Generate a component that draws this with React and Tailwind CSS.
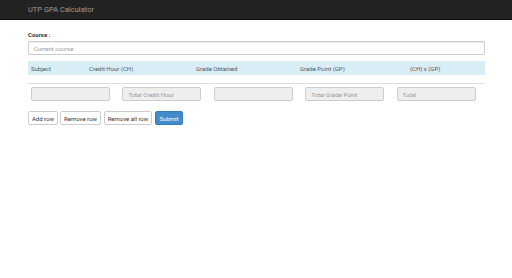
export default function App() {
  const font = { fontFamily: "Roboto, 'Liberation Sans', sans-serif" };
  const cols = [
    { label: "Subject", w: "w-[58px]" },
    { label: "Credit Hour (CH)", w: "w-[107px]" },
    { label: "Grade Obtained", w: "w-[104px]" },
    { label: "Grade Point (GP)", w: "w-[110px]" },
    { label: "(CH) x (GP)", w: "flex-1" },
  ];
  const inputs = ["", "Total Credit Hour", "", "Total Grade Point", "Total"];
  return (
    <div className="min-h-[278px] bg-white text-[#333]" style={font}>
      <div className="h-[20px] bg-[#222] border-b border-[#080808] flex items-center pl-[28px]">
        <span className="text-[7.5px] text-[#9d9d9d] leading-none">UTP GPA Calculator</span>
      </div>
      <div className="ml-[28px] mr-[27px]">
        <div className="mt-[12px] text-[6px] font-bold leading-none h-[7px]">Course :</div>
        <div className="mt-[2px] h-[14px] border border-[#ccc] rounded-[2px] flex items-center pl-[5px] text-[6px] text-[#999] shadow-[inset_0_1px_1px_rgba(0,0,0,0.075)]">
          Current course
        </div>
        <div className="mt-[6px] h-[14px] bg-[#d9edf7] flex items-center text-[6px] text-[#555]">
          {cols.map((c) => (
            <div key={c.label} className={`${c.w} pl-[3px]`}>{c.label}</div>
          ))}
        </div>
        <div className="mt-[8px] border-t border-[#ddd] pt-[3px] grid grid-cols-5">
          {inputs.map((p, i) => (
            <div key={i} className="pl-[3px]">
              <div className="w-[79px] h-[14px] bg-[#eee] border border-[#ccc] rounded-[2px] flex items-center pl-[5px] text-[6px] text-[#999]">
                {p}
              </div>
            </div>
          ))}
        </div>
        <div className="mt-[10px] flex text-[6px]">
          <button className="w-[30px] h-[14px] bg-white border border-[#ccc] rounded-[2px] text-[#333]">Add row</button>
          <button className="ml-[2px] w-[41px] h-[14px] bg-white border border-[#ccc] rounded-[2px] text-[#333]">Remove row</button>
          <button className="ml-[3px] w-[48px] h-[14px] bg-white border border-[#ccc] rounded-[2px] text-[#333]">Remove all row</button>
          <button className="ml-[3px] w-[28px] h-[14px] bg-[#428bca] border border-[#357ebd] rounded-[2px] text-white">Submit</button>
        </div>
      </div>
    </div>
  );
}
